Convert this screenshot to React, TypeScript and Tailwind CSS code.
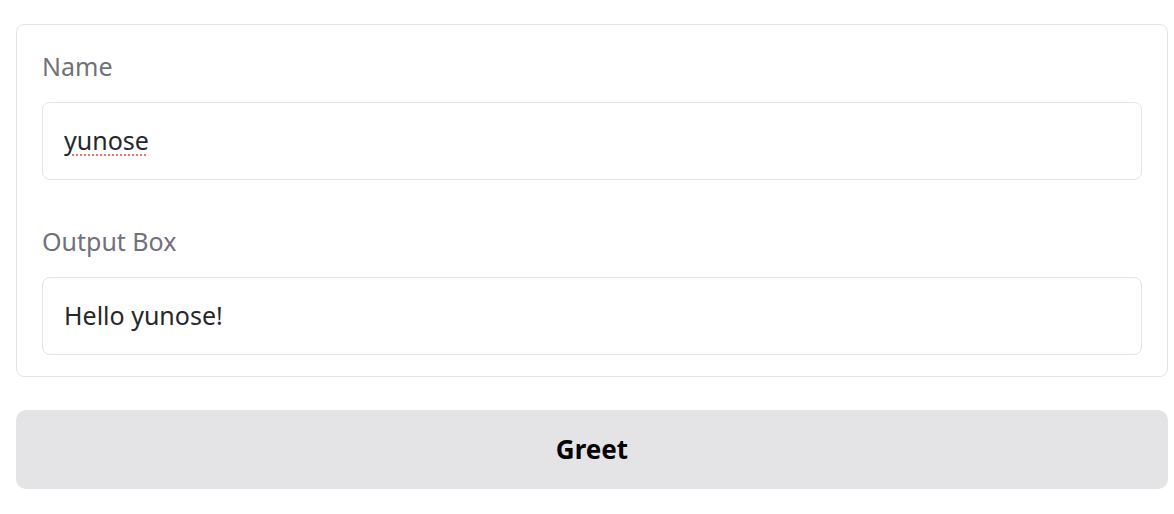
import React from 'react';

const font = { fontFamily: '"Noto Sans", "Open Sans", sans-serif' };

export default function App() {
  return (
    <div className="bg-white min-h-screen pl-4 pt-6" style={font}>
      <div className="w-[1152px] flex flex-col">
        <div className="border border-[#e4e4e7] rounded-lg px-[25px] pt-6 pb-[21px] flex flex-col">
          <label className="text-[25px] leading-[34px] text-[#71717a]">Name</label>
          <div className="mt-[19px] h-[78px] border border-[#e4e4e7] rounded-lg px-[21px] flex items-center text-[25px] text-[#27272a]">
            <span className="underline decoration-dotted decoration-[#f87171] decoration-2 underline-offset-4">yunose</span>
          </div>
          <label className="mt-[44px] text-[25px] leading-[34px] text-[#71717a]">Output Box</label>
          <div className="mt-[19px] h-[78px] border border-[#e4e4e7] rounded-lg px-[21px] flex items-center text-[25px] text-[#27272a]">
            Hello yunose!
          </div>
        </div>
        <button className="mt-[33px] h-[79px] rounded-[10px] bg-[#e4e4e7] text-[26px] font-bold text-black">
          Greet
        </button>
      </div>
    </div>
  );
}
